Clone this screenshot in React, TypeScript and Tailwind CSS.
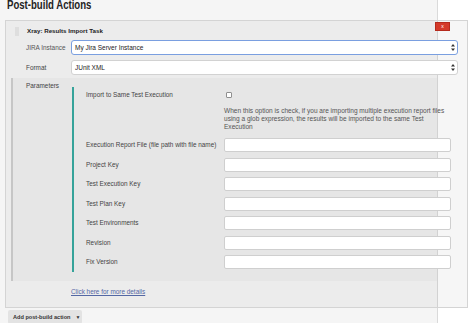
import React from "react";

const fields = [
  "Execution Report File (file path with file name)",
  "Project Key",
  "Test Execution Key",
  "Test Plan Key",
  "Test Environments",
  "Revision",
  "Fix Version",
];

function SelectArrows() {
  return (
    <svg width="4" height="7" viewBox="0 0 4 7">
      <path d="M2 0L4 2.6H0Z M2 7L0 4.4H4Z" fill="#333" />
    </svg>
  );
}

export default function App() {
  return (
    <div className="w-[474px] h-[323px] overflow-hidden bg-white flex font-['Liberation_Sans',Arial,sans-serif] text-[#333] text-[6.4px] leading-[8px]">
      <div className="w-[438px] shrink-0 bg-[#f5f5f5] border-r border-[#dadada]">
        <div className="h-[21px] pl-[7px]">
          <div className="-mt-[1px] text-[12px] leading-[12px] font-bold text-[#222] whitespace-nowrap origin-left scale-x-[0.8]">
            Post-build Actions
          </div>
        </div>

        <div className="ml-[5px] w-[463px] h-[288px] border border-[#d4d4d4] bg-black/[0.035] flex flex-col">
          {/* header */}
          <div className="h-[19px] shrink-0 flex items-start">
            <div className="ml-[9px] mt-[6px] w-[4px] h-[9px] bg-[#dedede]" />
            <div className="ml-[8px] mt-[6px] text-[6.2px] leading-[8px] font-bold text-[#222]">
              Xray: Results Import Task
            </div>
            <div className="ml-auto mr-[17px] mt-[1px] w-[15px] h-[9px] bg-[#d43a2a] border border-[#b52a1d] text-white text-[5px] leading-[5px] flex items-center justify-center">
              x
            </div>
          </div>

          <div className="h-[15px] shrink-0 flex items-center pl-[20px]">
            <div className="w-[45px] shrink-0 text-[#555]">JIRA Instance</div>
            <div className="w-[387px] h-[15px] shrink-0 bg-white border border-[#7a9fe0] rounded-[3px] flex items-center pl-[3px] pr-[2px] text-[6.5px] text-[#222]">
              <span className="flex-1">My Jira Server Instance</span>
              <SelectArrows />
            </div>
          </div>

          <div className="mt-[5px] h-[15px] shrink-0 flex items-center pl-[20px]">
            <div className="w-[45px] shrink-0 text-[#444]">Format</div>
            <div className="w-[387px] h-[15px] shrink-0 bg-white border border-[#d2d2d2] rounded-[3px] flex items-center pl-[3px] pr-[2px] text-[6.5px] text-[#222]">
              <span className="flex-1">JUnit XML</span>
              <SelectArrows />
            </div>
          </div>

          {/* parameters */}
          <div className="mt-[3px] ml-[5px] w-[426px] h-[203px] shrink-0 border-l-2 border-[#c6c6c6] bg-black/[0.025] flex">
            <div className="w-[59px] shrink-0 pl-[13px] pt-[4px] text-[#444]">Parameters</div>
            <div className="my-[9px] shrink-0 border-l-2 border-[#36a39a] pl-[12px] flex flex-col text-[#444]">
              <div className="mt-[1px] h-[14px] flex items-center">
                <div className="w-[138px] shrink-0">Import to Same Test Execution</div>
                <div className="ml-[2px] w-[6px] h-[6px] bg-white border border-[#8f8f8f] rounded-[1px]" />
              </div>
              <div className="mt-[5px] ml-[138px] whitespace-nowrap text-[6.55px] text-[#555]">
                When this option is check, if you are importing multiple execution report files
                <br />
                using a glob expression, the results will be imported to the same Test
                <br />
                Execution
              </div>
              <div className="mt-[7px] flex flex-col gap-[5.5px]">
                {fields.map((f) => (
                  <div key={f} className="h-[14px] flex items-center">
                    <div className="w-[138px] shrink-0 whitespace-nowrap">{f}</div>
                    <div className="w-[227px] h-[14px] shrink-0 bg-white border border-[#cfcfcf] rounded-[2px]" />
                  </div>
                ))}
              </div>
            </div>
          </div>

          <div className="flex-1 min-h-0 pl-[65px] pt-[7px]">
            <span className="text-[#5468a4] underline">Click here for more details</span>
          </div>
        </div>

        <div className="mt-[2px] ml-[8px] w-[74px] h-[14px] bg-[#e3e3e3] rounded-[2px] flex items-center pl-[5px] text-[5.6px] font-bold text-[#333]">
          <span>Add post-build action</span>
          <span className="ml-[5px] text-[5px]">▼</span>
        </div>
      </div>
      <div className="flex-1" />
    </div>
  );
}
